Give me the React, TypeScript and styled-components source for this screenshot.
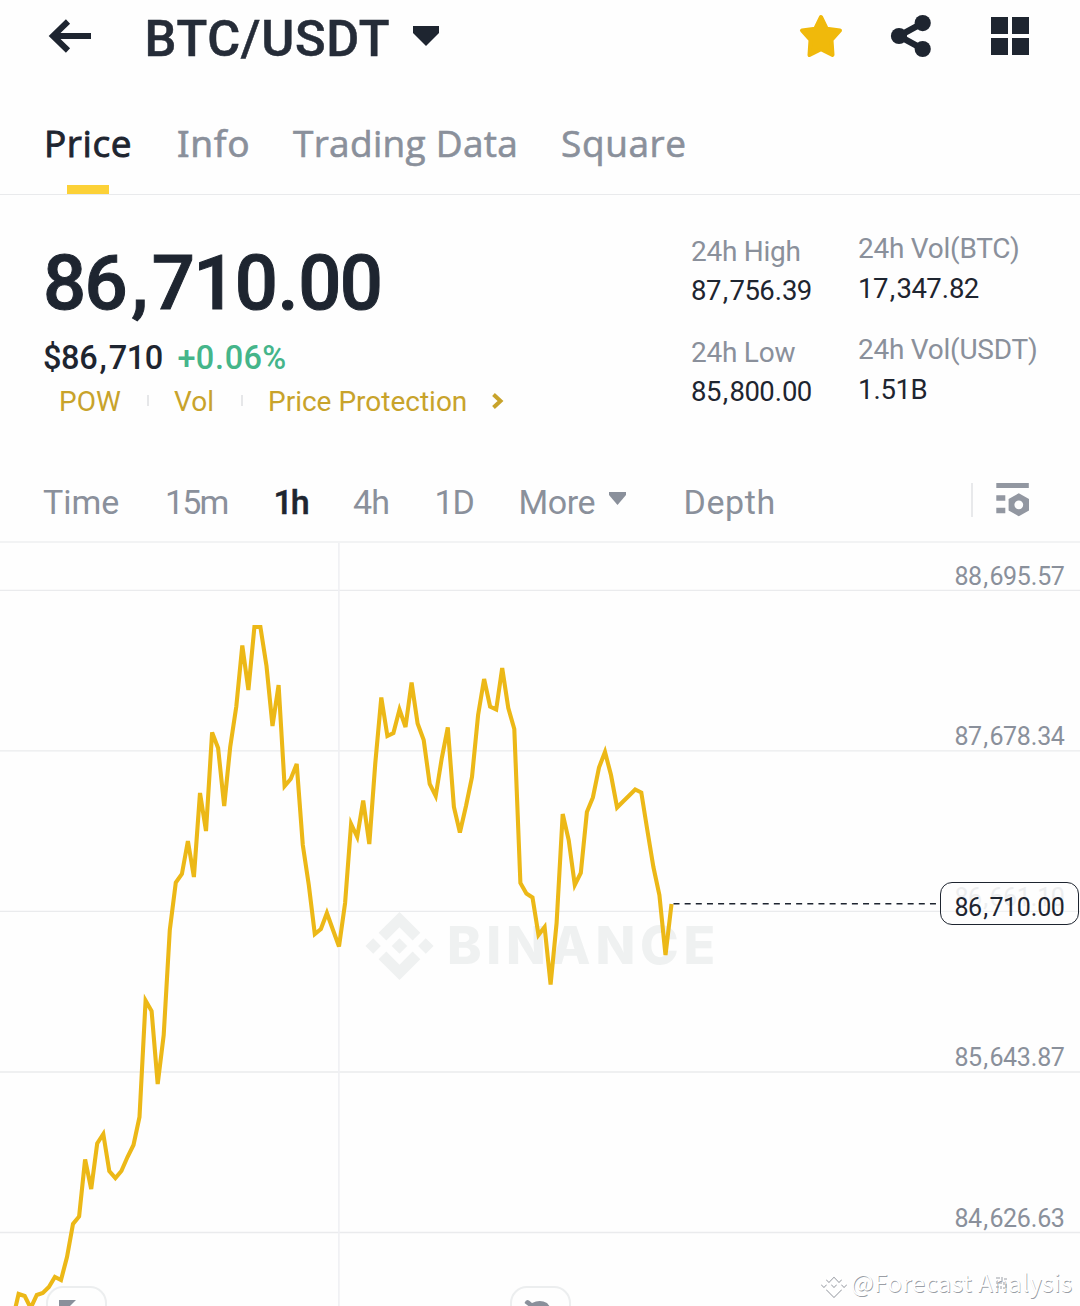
import React from "react";
import styled, { createGlobalStyle } from "styled-components";

const ink = "#1e2530";
const muted = "#8a909b";
const gold = "#c8a32b";
const sans = `Roboto, "Liberation Sans", sans-serif`;

const Global = createGlobalStyle`
  * { box-sizing: border-box; }
  body { margin: 0; background: #fefefe; font-family: ${sans}; color: ${ink}; }
`;

const Page = styled.main`
  width: 1080px;
  height: 1306px;
  overflow: hidden;
  display: flex;
  flex-direction: column;
  background: #fefefe;
  white-space: nowrap;
`;

/* ---------- header ---------- */
const Header = styled.header`
  height: 72px;
  display: flex;
  align-items: center;
  padding: 0 50px 0 48px;
`;
const Pair = styled.h1`
  margin: 0 0 0 52.5px;
  padding-top: 5px;
  font-size: 50.5px;
  line-height: 66px;
  font-weight: 500;
  letter-spacing: 0.7px;
  color: #252c38;
  -webkit-text-stroke: 0.5px #252c38;
`;
const HeaderCaret = styled.svg`
  margin-left: 22px;
`;
const Actions = styled.div`
  margin-left: auto;
  display: flex;
  align-items: center;
`;
const ShareIcon = styled.svg`
  margin-left: 47px;
`;
const GridIcon = styled.svg`
  margin-left: 58px;
`;

/* ---------- tabs ---------- */
const Tabs = styled.nav`
  height: 123px;
  padding: 47px 0 0 44px;
  border-bottom: 1px solid #e9eaec;
  display: grid;
  grid-template-columns: 133px 116px 268px auto;
  font-family: "Open Sans", "Noto Sans", sans-serif;
  font-size: 37px;
  line-height: 48px;
`;
const Tab = styled.div<{ $active?: boolean; $serifI?: boolean; $spacing: number }>`
  height: 76px;
  color: ${(p) => (p.$active ? ink : muted)};
  -webkit-text-stroke: ${(p) => (p.$active ? 0.9 : 0.6)}px ${(p) => (p.$active ? ink : muted)};
  letter-spacing: ${(p) => p.$spacing}px;
  ${(p) => p.$serifI && `font-family: "Noto Sans", "Open Sans", sans-serif;`}
`;
const TabBar = styled.div`
  width: 42px;
  height: 9px;
  margin: 18px 0 0 22.5px;
  background: #fcd137;
`;

/* ---------- quote ---------- */
const Quote = styled.section`
  height: 268px;
  display: grid;
  grid-template-columns: 648px 167px auto;
  padding-left: 43px;
`;
const Summary = styled.div`
  padding-top: 48px;
`;
const Punct = styled.span<{ $wide: boolean }>`
  padding: 0 ${(p) => (p.$wide ? 0.07 : 0.018)}em;
`;
const LastPrice = styled.div`
  font-size: 76px;
  line-height: 80px;
  font-weight: 500;
  letter-spacing: -1.75px;
  -webkit-text-stroke: 1px ${ink};
`;
const FiatRow = styled.div`
  margin-top: 18px;
  display: grid;
  grid-template-columns: 134.5px auto;
  font-size: 32.5px;
  line-height: 34px;
  font-weight: 500;
`;
const Fiat = styled.span`
  letter-spacing: -0.4px;
`;
const Change = styled.span`
  letter-spacing: 0.2px;
  color: #45b58a;
`;
const TagRow = styled.div`
  margin: 12px 0 0 16px;
  display: grid;
  grid-template-columns: 87.5px 27.5px 66.5px 27.5px 222.5px auto;
  align-items: center;
  font-size: 28px;
  line-height: 30px;
  color: ${gold};
`;
const TagDivider = styled.i`
  width: 2px;
  height: 11px;
  margin-bottom: 3px;
  background: #e6e7e9;
`;
const TagChevron = styled.svg`
  margin-bottom: 3px;
`;
const Stats = styled.dl<{ $top: number }>`
  margin: 0;
  padding-top: ${(p) => p.$top}px;
  line-height: 30px;
`;
const StatLabel = styled.dt`
  font-size: 28px;
  letter-spacing: -0.25px;
  color: ${muted};
`;
const StatValue = styled.dd`
  margin: 9.5px 0 31.5px;
  font-size: 27.5px;
  letter-spacing: -0.55px;
  color: ${ink};
`;

/* ---------- intervals ---------- */
const Intervals = styled.nav`
  height: 80px;
  padding-left: 43px;
  border-bottom: 2px solid #f2f3f4;
  display: grid;
  grid-template-columns: 122px 108.5px 79.5px 81.5px 84px 90px 75px 287px 25.5px auto;
  align-items: center;
  font-size: 34px;
  line-height: 40px;
  color: ${muted};
`;
const Interval = styled.span<{ $active?: boolean; $spacing?: number }>`
  letter-spacing: ${(p) => p.$spacing ?? 0}px;
  ${(p) => p.$active && `color: ${ink}; font-weight: 500; -webkit-text-stroke: 0.5px ${ink};`}
`;
const ToolDivider = styled.i`
  width: 2px;
  height: 34px;
  margin-bottom: 5px;
  background: #e8e9eb;
`;
const MoreCaret = styled.svg`
  margin-bottom: 7px;
`;
const SettingsIcon = styled.svg`
  margin-bottom: 5px;
`;

/* ---------- chart ---------- */
const Chart = styled.section`
  position: relative;
  height: 763px;
  overflow: hidden;
`;
const Plot = styled.svg`
  position: absolute;
  inset: 0;
`;
const Watermark = styled.div`
  position: absolute;
  left: 365px;
  top: 368px;
  display: flex;
  align-items: center;
  gap: 13px;
  color: #eff1f1;
  font: 800 52px/70px Inter, sans-serif;
  letter-spacing: 4.8px;
`;
const Axis = styled.div`
  position: absolute;
  left: 954.5px;
  top: 18.5px;
  display: flex;
  flex-direction: column;
  font-size: 25px;
  line-height: 30px;
  letter-spacing: -0.5px;
  color: ${muted};
`;
const Tick = styled.span<{ $faint?: boolean }>`
  height: 160.5px;
  ${(p) => p.$faint && `color: #e6e7e9;`}
`;
const PriceTag = styled.div`
  position: absolute;
  left: 940px;
  top: 339px;
  width: 139px;
  height: 43px;
  padding: 9px 0 0 13.5px;
  border: 1.5px solid ${ink};
  border-radius: 12px;
  background: rgba(254, 254, 254, 0.3);
  font-size: 25px;
  line-height: 32px;
  letter-spacing: -0.5px;
`;
const ChartButton = styled.div<{ $left: number }>`
  position: absolute;
  left: ${(p) => p.$left}px;
  top: 743px;
  width: 61px;
  height: 60px;
  border: 2px solid #eceeef;
  border-radius: 17px;
  background: #fefefe;
`;
const Signature = styled.div`
  position: absolute;
  left: 821px;
  top: 723px;
  display: flex;
  align-items: center;
  gap: 4px;
  color: #fff;
  font: 400 24px/32px "Noto Sans CJK SC", "Noto Sans", sans-serif;
  letter-spacing: 0.4px;
  text-shadow: 0.7px 0.7px 0.6px #9a9ea5;
`;
const SignatureLogo = styled.svg`
  margin-top: 4px;
  filter: drop-shadow(0.5px 1.2px 0.3px #8f939b);
`;
const Speckle = styled.svg`
  position: absolute;
  left: 174px;
  top: 10px;
`;

const BINANCE_MARK =
  "M16.624 13.9202l2.7175 2.7154-7.353 7.353-7.353-7.352 2.7175-2.7164 4.6355 4.6595 4.6356-4.6595zm4.6366-4.6366L24 12l-2.7154 2.7164L18.5682 12l2.6924-2.7164zm-9.272.001l2.7163 2.6914-2.7164 2.7174v-.001L9.2721 12l2.7164-2.7154zm-9.2722-.001L5.4088 12l-2.6914 2.6924L0 12l2.7164-2.7164zM11.9885.0115l7.353 7.329-2.7174 2.7154-4.6356-4.6356-4.6355 4.6595-2.7174-2.7154 7.353-7.353z";

/* hourly closes, newest first, as heights on the page */
const STEP = 6.045;
const LAST_X = 671.5;
const closes = [
  904, 955, 895, 867, 830, 792.5, 789.5, 795.5, 801.5, 807.5, 775, 752, 767.5, 797.5, 812, 873, 885, 840, 814, 923,
  984.5, 927, 935, 897.5, 893.5, 883, 729, 708, 668, 709.5, 706.5, 679, 715, 777, 806, 832.5, 807, 727.5, 758,
  796, 784, 740, 723.5, 682.5, 727, 709.5, 733, 736, 697.5, 763, 844, 800.5, 837, 824, 903, 946.5, 930, 913,
  929, 934, 885, 845, 764, 779, 786, 685, 726, 666, 627, 627, 690, 645.5, 706.5, 747, 806, 748, 732.5, 831, 793,
  877, 841, 874, 882.5, 930, 1035, 1084, 1011, 1000.5, 1117, 1145, 1157, 1171, 1178, 1171, 1134, 1143.5, 1189,
  1159.5, 1216.5, 1224, 1257, 1280, 1277, 1287, 1293, 1295, 1308, 1296, 1294, 1320,
];
const linePoints = closes.map((y, i) => `${(LAST_X - i * STEP).toFixed(1)},${y}`).join(" ");
const gridRows = [590.3, 750.9, 911.4, 1072, 1232.5];
const ticks = ["88,695.57", "87,678.34", "86,661.10", "85,643.87", "84,626.63"];

function Figure({ children }: { children: string }) {
  return (
    <>
      {children.split(/([.,])/).map((part, i) =>
        part === "." || part === "," ? (
          <Punct key={i} $wide={part === ","}>
            {part}
          </Punct>
        ) : (
          part
        ),
      )}
    </>
  );
}

const stats = [
  { top: 41.5, rows: [["24h High", "87,756.39"], ["24h Low", "85,800.00"]] },
  { top: 39.3, rows: [["24h Vol(BTC)", "17,347.82"], ["24h Vol(USDT)", "1.51B"]] },
];

export default function App() {
  return (
    <Page>
      <Global />
      <Header>
        <svg width="44" height="36" viewBox="48 18 44 36" fill="none" stroke={ink} strokeWidth="6">
          <path d="M91 36H53M68 21.5L53 36l15 14.5" />
        </svg>
        <Pair>BTC/USDT</Pair>
        <HeaderCaret width="28" height="22" viewBox="412 25 28 22">
          <path d="M413 26h26v7L426 46 413 33z" fill={ink} />
        </HeaderCaret>
        <Actions>
          <svg width="44" height="44" viewBox="799 14 44 44">
            <path
              d="M821 17L826.8 28.8 840 30.5 831.5 40 832.5 55 821 49.2 809.5 55 810.5 40 802 30.5 815.2 28.8z"
              fill="#f0b90b"
              stroke="#f0b90b"
              strokeWidth="4"
              strokeLinejoin="round"
            />
          </svg>
          <ShareIcon width="42" height="44" viewBox="890 14 42 44" fill={ink}>
            <path d="M922.7 23L899 36l23.7 13" fill="none" stroke={ink} strokeWidth="6.5" />
            <circle cx="899" cy="36" r="8.1" />
            <circle cx="922.7" cy="23.1" r="8.1" />
            <circle cx="922.7" cy="49" r="8.1" />
          </ShareIcon>
          <GridIcon width="40" height="40" viewBox="990 16 40 40" fill={ink}>
            <path d="M991 17h17v17h-17zM1012 17h17v17h-17zM991 38h17v17h-17zM1012 38h17v17h-17z" />
          </GridIcon>
        </Actions>
      </Header>

      <Tabs>
        <Tab $active $spacing={0.6}>
          Price
          <TabBar />
        </Tab>
        <Tab $serifI $spacing={0.7}>Info</Tab>
        <Tab $spacing={0.3}>Trading Data</Tab>
        <Tab $spacing={0.6}>Square</Tab>
      </Tabs>

      <Quote>
        <Summary>
          <LastPrice>
            <Figure>86,710.00</Figure>
          </LastPrice>
          <FiatRow>
            <Fiat>
              <Figure>$86,710</Figure>
            </Fiat>
            <Change>
              <Figure>+0.06%</Figure>
            </Change>
          </FiatRow>
          <TagRow>
            <span>POW</span>
            <TagDivider />
            <span>Vol</span>
            <TagDivider />
            <span>Price Protection</span>
            <TagChevron width="14" height="18" viewBox="491 391 14 18" fill="none" stroke={gold} strokeWidth="4">
              <path d="M493.5 393.5l7 6.5-7 6.5" />
            </TagChevron>
          </TagRow>
        </Summary>
        {stats.map((col) => (
          <Stats key={col.top} $top={col.top}>
            {col.rows.map(([label, value]) => (
              <React.Fragment key={label}>
                <StatLabel>{label}</StatLabel>
                <StatValue>
                  <Figure>{value}</Figure>
                </StatValue>
              </React.Fragment>
            ))}
          </Stats>
        ))}
      </Quote>

      <Intervals>
        <Interval>Time</Interval>
        <Interval $spacing={-1.8}>15m</Interval>
        <Interval $active $spacing={-2}>1h</Interval>
        <Interval $spacing={-0.8}>4h</Interval>
        <Interval $spacing={-1.2}>1D</Interval>
        <Interval $spacing={-0.4}>More</Interval>
        <MoreCaret width="17" height="14" viewBox="609 492 17 14">
          <path d="M609 492h17v3l-8.5 10-8.5-10z" fill={muted} />
        </MoreCaret>
        <Interval $spacing={0.6}>Depth</Interval>
        <ToolDivider />
        <SettingsIcon width="34" height="34" viewBox="996 483 34 34" fill="#9297a1">
          <path d="M996.3 483h32.5v5h-32.5zM996.3 495.2h9v5.5h-9zM996.3 507.8h9v5.5h-9z" />
          <path
            fillRule="evenodd"
            d="M1018.8 493.3l10.2 5.6v11.6l-10.2 5.7-10.2-5.7v-11.6zM1018.8 500.4a4.4 4.4 0 1 0 0 8.8 4.4 4.4 0 0 0 0-8.8z"
          />
        </SettingsIcon>
      </Intervals>

      <Chart>
        <Plot width="1080" height="763" viewBox="0 543 1080 763" fill="none">
          {gridRows.map((y) => (
            <path key={y} d={`M0 ${y}H1080`} stroke="#eaebed" strokeWidth="1.3" />
          ))}
          <path d="M338.9 543V1306" stroke="#eff0f3" strokeWidth="1.6" />
        </Plot>
        <Watermark>
          <svg width="69" height="68" viewBox="0 0 24 24" fill="currentColor">
            <path d={BINANCE_MARK} />
          </svg>
          BINANCE
        </Watermark>
        <Plot width="1080" height="763" viewBox="0 543 1080 763" fill="none">
          <polyline points={linePoints} stroke="#ecb817" strokeWidth="4.1" />
          <path d="M673.5 903.7H940" stroke={ink} strokeWidth="1.4" strokeDasharray="6 5.15" />
        </Plot>
        <Axis>
          {ticks.map((t, i) => (
            <Tick key={t} $faint={i === 2}>
              <Figure>{t}</Figure>
            </Tick>
          ))}
        </Axis>
        <PriceTag>
          <Figure>86,710.00</Figure>
        </PriceTag>
        <ChartButton $left={46}>
          <svg width="57" height="56" viewBox="48 1288 57 56" fill={muted}>
            <path d="M59 1300h17l-17 17z" />
          </svg>
        </ChartButton>
        <ChartButton $left={509.5}>
          <svg width="57" height="56" viewBox="511.5 1288 57 56" fill={muted}>
            <path d="M524 1303q1.5-4 4.5-2.5l3 2.5q8-4 15 0l4 5h-20z" />
          </svg>
        </ChartButton>
        <Signature>
          <SignatureLogo width="26" height="26" viewBox="0 0 24 24" fill="#fff">
            <path d={BINANCE_MARK} />
          </SignatureLogo>
          @Forecast Analysis
          <Speckle width="13" height="14" viewBox="0 0 13 14" fill="none" stroke="#9a9ea5" strokeWidth="1">
            <path d="M1 2h4M7 1v4M9 3h3M2 5v3M4 7h3M9 6v3M11 8v4M1 11h3M6 10v3M8 12h2" />
          </Speckle>
        </Signature>
      </Chart>
    </Page>
  );
}
